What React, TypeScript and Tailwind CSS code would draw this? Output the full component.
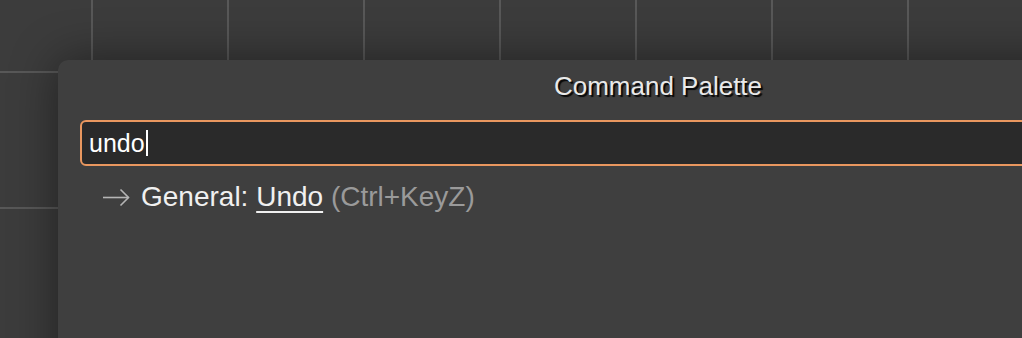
export default function App() {
  return (
    <div className="relative h-[338px] w-[1022px] overflow-hidden bg-[#3c3c3c] bg-[linear-gradient(to_right,#585858_2px,transparent_2px),linear-gradient(to_bottom,#585858_2px,transparent_2px)] bg-[size:136px_136px] bg-[position:-45px_-65px]">
      {/* Command palette */}
      <div
        className="absolute left-[58px] top-[60px] flex h-[420px] w-[1200px] flex-col rounded-[10px] bg-[#3f3f3f] shadow-[0_0_48px_rgba(0,0,0,0.45)]"
        style={{ fontFamily: '"Liberation Sans", Arial, sans-serif' }}
      >
        <div className="pt-[10px] text-center text-[26px] leading-[32px] text-[#e9e9e9] [text-shadow:2px_2px_1px_rgba(0,0,0,0.9)]">
          Command Palette
        </div>

        <div className="mx-[22px] mt-[18px] flex h-[46px] items-center rounded-[6px] border-2 border-[#e9975f] bg-[#2a2a2a] px-[7px]">
          <span className="text-[25px] leading-none text-white">undo</span>
          <span className="ml-[1px] h-[26px] w-[2px] bg-white" />
        </div>

        <div className="ml-[44px] mt-[14px] flex items-center text-[28px] leading-[34px]">
          <svg width="28" height="20" viewBox="0 0 28 20" className="mr-[11px] text-[#b5b5b5]" fill="none" stroke="currentColor" strokeWidth="1.6">
            <path d="M1 10.5H26.5" />
            <path d="M18.5 2.5L26.5 10.5L18.5 18.5" />
          </svg>
          <span className="text-[#f0f0f0]">General:&nbsp;</span>
          <span className="text-[#f0f0f0] underline decoration-2 underline-offset-[5px]">Undo</span>
          <span className="text-[#9a9a9a]">&nbsp;(Ctrl+KeyZ)</span>
        </div>
      </div>
    </div>
  );
}
